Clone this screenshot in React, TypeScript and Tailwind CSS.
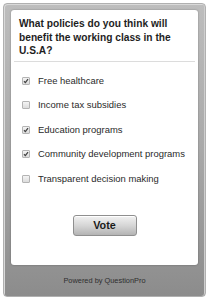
import React from "react";

const options = [
    { label: "Free healthcare", checked: true },
    { label: "Income tax subsidies", checked: false },
    { label: "Education programs", checked: true },
    { label: "Community development programs", checked: true },
    { label: "Transparent decision making", checked: false },
];

function Box({ checked }: { checked: boolean }) {
    return (
        <span className="w-[8px] h-[8px] rounded-[1px] border border-[#b4b4b4] bg-gradient-to-b from-[#f4f4f4] to-[#dcdcdc] grid place-items-center shrink-0">
            {checked && (
                <svg width="6" height="6" viewBox="0 0 6 6">
                    <path d="M1 3.2 L2.4 4.6 L5 1.2" fill="none" stroke="#444" strokeWidth="1.3" />
                </svg>
            )}
        </span>
    );
}

export default function App() {
    return (
        <div className="w-[209px] h-[300px] bg-white p-[3px] font-['Liberation_Sans',Arial,sans-serif]">
            <div className="h-[294px] rounded-[4px] border border-[#b0b0b0] bg-gradient-to-b from-[#bdbdbd] via-[#a9a9a9] to-[#8c8c8c] shadow-[inset_1px_1px_0_#d9d9d9,inset_-1px_0_0_#cfcfcf] px-[7px] pt-[6px] flex flex-col">
                <div className="h-[255px] bg-white rounded-[3px] shadow-[0_0_2px_rgba(0,0,0,0.35)] flex flex-col">
                    <div className="px-[8px] pt-[7px] pb-[3px] text-[10.2px] leading-[13.5px] font-bold text-[#1e1e1e]">
                        What policies do you think will benefit the working class in the U.S.A?
                    </div>
                    <div className="mx-[3px] border-t border-[#dcdcdc]"></div>
                    <div className="pt-[7px] px-[11px] flex flex-col">
                        {options.map((o) => (
                            <div key={o.label} className="h-[24.5px] flex items-center gap-[8px] text-[9.45px] text-[#2a2a2a]">
                                <Box checked={o.checked} />
                                <span>{o.label}</span>
                            </div>
                        ))}
                    </div>
                    <div className="flex justify-center pt-[24px]">
                        <button className="w-[64px] h-[21px] rounded-[3px] border border-[#8f8f8f] bg-gradient-to-b from-[#f2f2f2] via-[#d6d6d6] to-[#b4b4b4] shadow-[inset_0_1px_0_#ffffff] text-[10.8px] font-bold text-[#1a1a1a]">
                            Vote
                        </button>
                    </div>
                </div>
                <div className="flex-1 flex items-center justify-center text-[7.4px] text-[#2e2e2e]">
                    Powered by QuestionPro
                </div>
            </div>
        </div>
    );
}
